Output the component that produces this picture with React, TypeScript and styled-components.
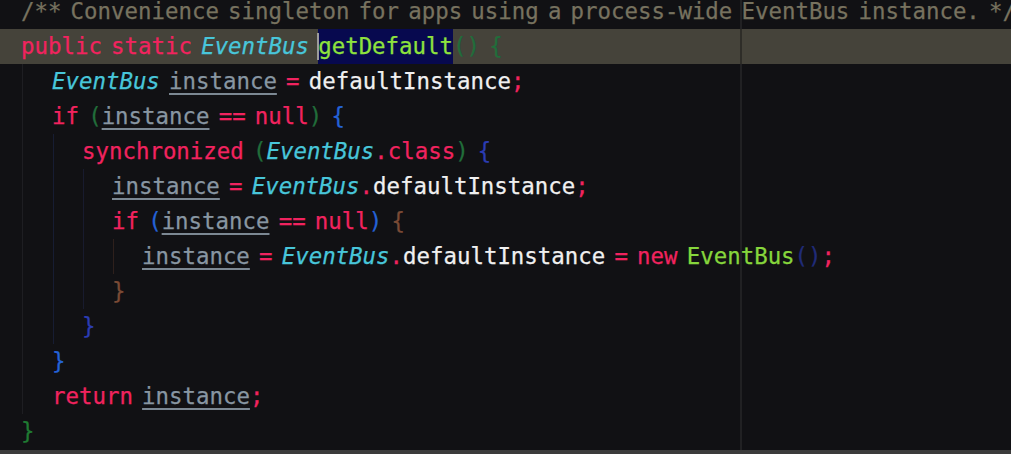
import styled, { createGlobalStyle } from 'styled-components';

const GlobalStyle = createGlobalStyle`
    html, body {
        margin: 0;
        padding: 0;
        background: #111114;
    }
`;

const Window = styled.div`
    width: 1011px;
    height: 454px;
    display: flex;
    flex-direction: column;
    overflow: hidden;
`;

const Editor = styled.div`
    flex: 1;
    overflow: hidden;
    background:
        linear-gradient(to right, transparent 740px, #212123 740px, #212123 742px, transparent 742px),
        #111114;
    font-family: "DejaVu Sans Mono", "Liberation Mono", monospace;
    font-size: 22.4px;
    word-spacing: -4.3px;
    -webkit-text-stroke: 0.25px currentColor;
`;

const Code = styled.div`
    margin-top: -6px;
`;

const Line = styled.div<{ $indent?: number; $current?: boolean }>`
    height: 35px;
    line-height: 35px;
    white-space: pre;
    padding-left: ${(p) => p.$indent ?? 0}px;
    background: ${(p) =>
        p.$current
            ? 'linear-gradient(to right, #45433a 740px, #2e2d28 740px, #2e2d28 742px, #45433a 742px)'
            : 'transparent'};
`;

const Block = styled.div<{ $offset: number; $pad: number; $guide: string }>`
    margin-left: ${(p) => p.$offset}px;
    padding-left: ${(p) => p.$pad}px;
    border-left: 1px solid ${(p) => p.$guide};
`;

const Comment = styled.span`
    color: #77725f;
`;

const Kw = styled.span`
    color: #f1235f;
`;

const Type = styled.span<{ $plain?: boolean }>`
    color: ${(p) => (p.$plain ? '#86d63c' : '#48c6da')};
    font-style: ${(p) => (p.$plain ? 'normal' : 'italic')};
`;

const Field = styled.span`
    color: #f0f0f0;
`;

const Local = styled.span`
    color: #8896a2;
    text-decoration: underline;
    text-decoration-color: #7c8893;
    text-decoration-thickness: 1.5px;
    text-underline-offset: 4px;
`;

const Br = styled.span<{ $c: string }>`
    color: ${(p) => p.$c};
`;

const Selection = styled.span`
    display: inline-block;
    height: 35px;
    background: #07094f;
    color: #8ee23d;
    &::before {
        content: '';
        display: inline-block;
        width: 2px;
        height: 27px;
        margin-left: -1px;
        margin-right: -1px;
        vertical-align: -6px;
        background: #9c9c9c;
    }
`;

const Strip = styled.div`
    height: 4px;
    background: #3b3b3b;
`;

const GREEN = '#216d3a';
const BLUE = '#2462d6';
const NAVY = '#2b3cb2';
const BROWN = '#7a4a35';
const DEEP = '#202b78';

function App() {
    return (
        <Window>
            <GlobalStyle />
            <Editor>
                <Code>
                    <Line $indent={21}>
                        <Comment>/** Convenience singleton for apps using a process-wide EventBus instance. */</Comment>
                    </Line>
                    <Line $indent={21} $current>
                        <Kw>public</Kw> <Kw>static</Kw> <Type>EventBus</Type> <Selection>getDefault</Selection>
                        <Br $c={GREEN}>()</Br> <Br $c={GREEN}>{'{'}</Br>
                    </Line>
                    <Block $offset={22} $pad={29} $guide="#1e1e22">
                        <Line>
                            <Type>EventBus</Type> <Local>instance</Local> <Kw>=</Kw> <Field>defaultInstance</Field>
                            <Kw>;</Kw>
                        </Line>
                        <Line>
                            <Kw>if</Kw> <Br $c={GREEN}>(</Br>
                            <Local>instance</Local> <Kw>==</Kw> <Kw>null</Kw>
                            <Br $c={GREEN}>)</Br> <Br $c={BLUE}>{'{'}</Br>
                        </Line>
                        <Block $offset={1} $pad={28} $guide="#171d33">
                            <Line>
                                <Kw>synchronized</Kw> <Br $c={GREEN}>(</Br>
                                <Type>EventBus</Type>
                                <Kw>.class</Kw>
                                <Br $c={GREEN}>)</Br> <Br $c={NAVY}>{'{'}</Br>
                            </Line>
                            <Block $offset={1} $pad={28} $guide="#181b2e">
                                <Line>
                                    <Local>instance</Local> <Kw>=</Kw> <Type>EventBus</Type>
                                    <Kw>.</Kw>
                                    <Field>defaultInstance</Field>
                                    <Kw>;</Kw>
                                </Line>
                                <Line>
                                    <Kw>if</Kw> <Br $c={BLUE}>(</Br>
                                    <Local>instance</Local> <Kw>==</Kw> <Kw>null</Kw>
                                    <Br $c={BLUE}>)</Br> <Br $c={BROWN}>{'{'}</Br>
                                </Line>
                                <Block $offset={1} $pad={28} $guide="#2e201c">
                                    <Line>
                                        <Local>instance</Local> <Kw>=</Kw> <Type>EventBus</Type>
                                        <Kw>.</Kw>
                                        <Field>defaultInstance</Field> <Kw>=</Kw> <Kw>new</Kw>{' '}
                                        <Type $plain>EventBus</Type>
                                        <Br $c={DEEP}>()</Br>
                                        <Kw>;</Kw>
                                    </Line>
                                </Block>
                                <Line>
                                    <Br $c={BROWN}>{'}'}</Br>
                                </Line>
                            </Block>
                            <Line>
                                <Br $c={NAVY}>{'}'}</Br>
                            </Line>
                        </Block>
                        <Line>
                            <Br $c={BLUE}>{'}'}</Br>
                        </Line>
                        <Line>
                            <Kw>return</Kw> <Local>instance</Local>
                            <Kw>;</Kw>
                        </Line>
                    </Block>
                    <Line $indent={21}>
                        <Br $c="#1f7a32">{'}'}</Br>
                    </Line>
                </Code>
            </Editor>
            <Strip />
        </Window>
    );
}

export default App;
